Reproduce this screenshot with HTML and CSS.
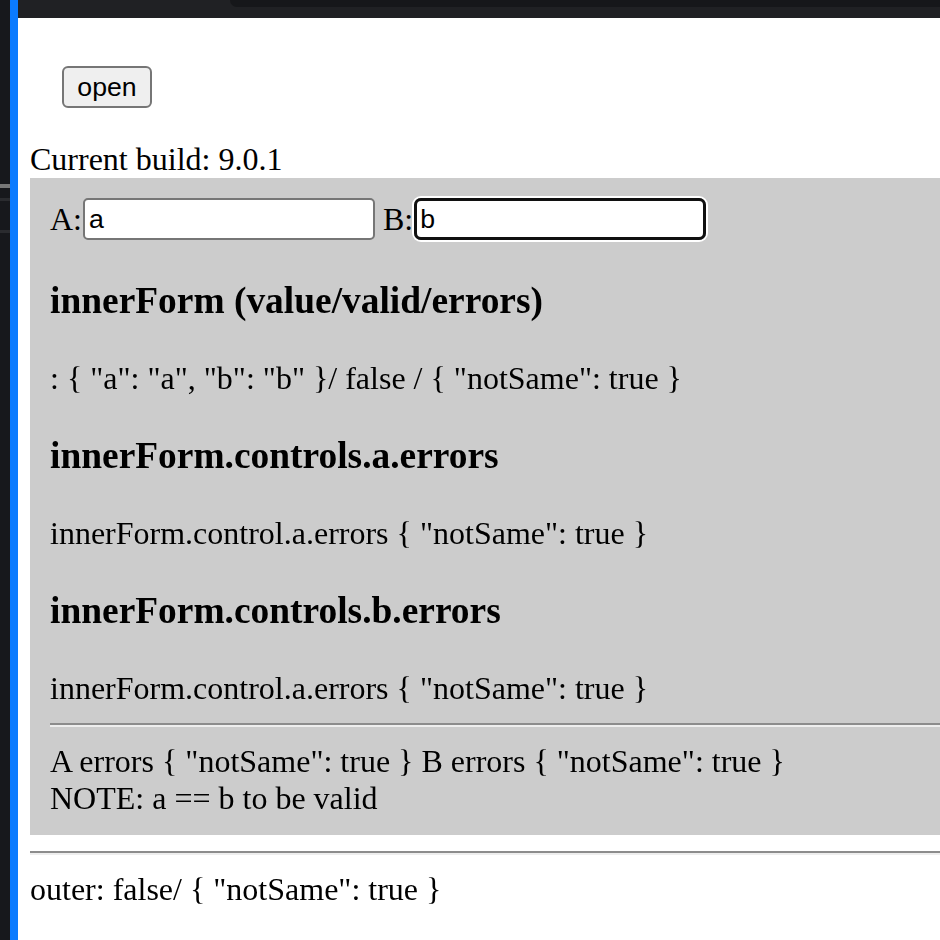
FILE: index.html
```html
<!DOCTYPE html>
<html lang="en">
<head>
  <meta charset="UTF-8" />
  <title>Inner form demo</title>
  <link rel="stylesheet" href="styles.css">
</head>
<body>
  <div class="frame">
    <div class="rail"></div>
    <div class="accent"></div>
    <div class="main">
      <div class="topbar"><div class="tab"></div></div>

      <div class="page">
        <div class="toolbar">
          <button class="btn" type="button">open</button>
        </div>
        <div class="build">Current build: 9.0.1</div>

        <div class="panel">
          <div class="fields">
            A:<input class="field" type="text" value="a"> B:<input class="field" id="fieldB" type="text" value="b" autofocus>
          </div>

          <h3>innerForm (value/valid/errors)</h3>
          <p>: { "a": "a", "b": "b" }/ false / { "notSame": true }</p>

          <h3>innerForm.controls.a.errors</h3>
          <p>innerForm.control.a.errors { "notSame": true }</p>

          <h3>innerForm.controls.b.errors</h3>
          <p class="last">innerForm.control.a.errors { "notSame": true }</p>

          <hr>
          <div>A errors { "notSame": true } B errors { "notSame": true }</div>
          <div>NOTE: a == b to be valid</div>
        </div>

        <hr>
        <div>outer: false/ { "notSame": true }</div>
      </div>
    </div>
  </div>

  <script>
    // caret after the "b"
    const b = document.getElementById("fieldB");
    b.focus();
    b.setSelectionRange(1, 1);
  </script>
</body>
</html>
```

FILE: styles.css
```css
html, body {
  margin: 0;
  height: 100%;
  background: #fff;
}

.frame {
  display: flex;
  height: 940px;
  overflow: hidden;
}

.rail {
  width: 10px;
  flex-shrink: 0;
  background:
    linear-gradient(#777, #777) 0 184px / 100% 4px no-repeat,
    linear-gradient(#2a2b2f, #2a2b2f) 0 198px / 100% 3px no-repeat,
    linear-gradient(#2a2b2f, #2a2b2f) 0 230px / 100% 3px no-repeat,
    #17181c;
}

.accent {
  width: 8px;
  flex-shrink: 0;
  background: #0b7bff;
}

.main {
  flex: 1;
  min-width: 0;
}

.topbar {
  height: 18px;
  background: #202124;
  display: flex;
}

.tab {
  margin-left: 212px;
  flex: 1;
  height: 7px;
  background: #16171a;
  border-bottom-left-radius: 16px;
}

.page {
  padding-left: 12px;
  font-family: "Liberation Serif", "Times New Roman", serif;
  font-size: 32px;
  line-height: 37px;
  color: #000;
}

.toolbar {
  padding: 48px 0 33px 32px;
  line-height: 0;
}

.btn {
  height: 42px;
  width: 90px;
  padding: 0;
  font-family: "Liberation Sans", Arial, sans-serif;
  font-size: 26.67px;
  color: #000;
  background: #efefef;
  border: 2px solid #767676;
  border-radius: 6px;
}

.panel {
  background: #cccccc;
  padding: 20px 0 18px 20px;
}

.fields {
  height: 44px;
  line-height: 42px;
}

.field {
  box-sizing: border-box;
  width: 292px;
  height: 42px;
  margin-left: 1px;
  padding: 2px 4px;
  vertical-align: top;
  font-family: "Liberation Sans", Arial, sans-serif;
  font-size: 26.67px;
  color: #000;
  background: #fff;
  border: 2px solid #767676;
  border-radius: 5px;
  caret-color: #000;
}

.field:focus {
  outline: 3px solid #101010;
  outline-offset: -3px;
  box-shadow: 0 0 0 2px #fff;
  border-radius: 7px;
}

h3 {
  font-size: 37.44px;
  line-height: 43px;
  font-weight: bold;
  margin: 37.44px 0;
}

p {
  margin: 32px 0;
}

p.last {
  margin-bottom: 0;
}

hr {
  margin: 16px 0;
  border: 0;
  border-top: 2px solid #8c8c8c;
  border-bottom: 2px solid #eeeeee;
}
```
